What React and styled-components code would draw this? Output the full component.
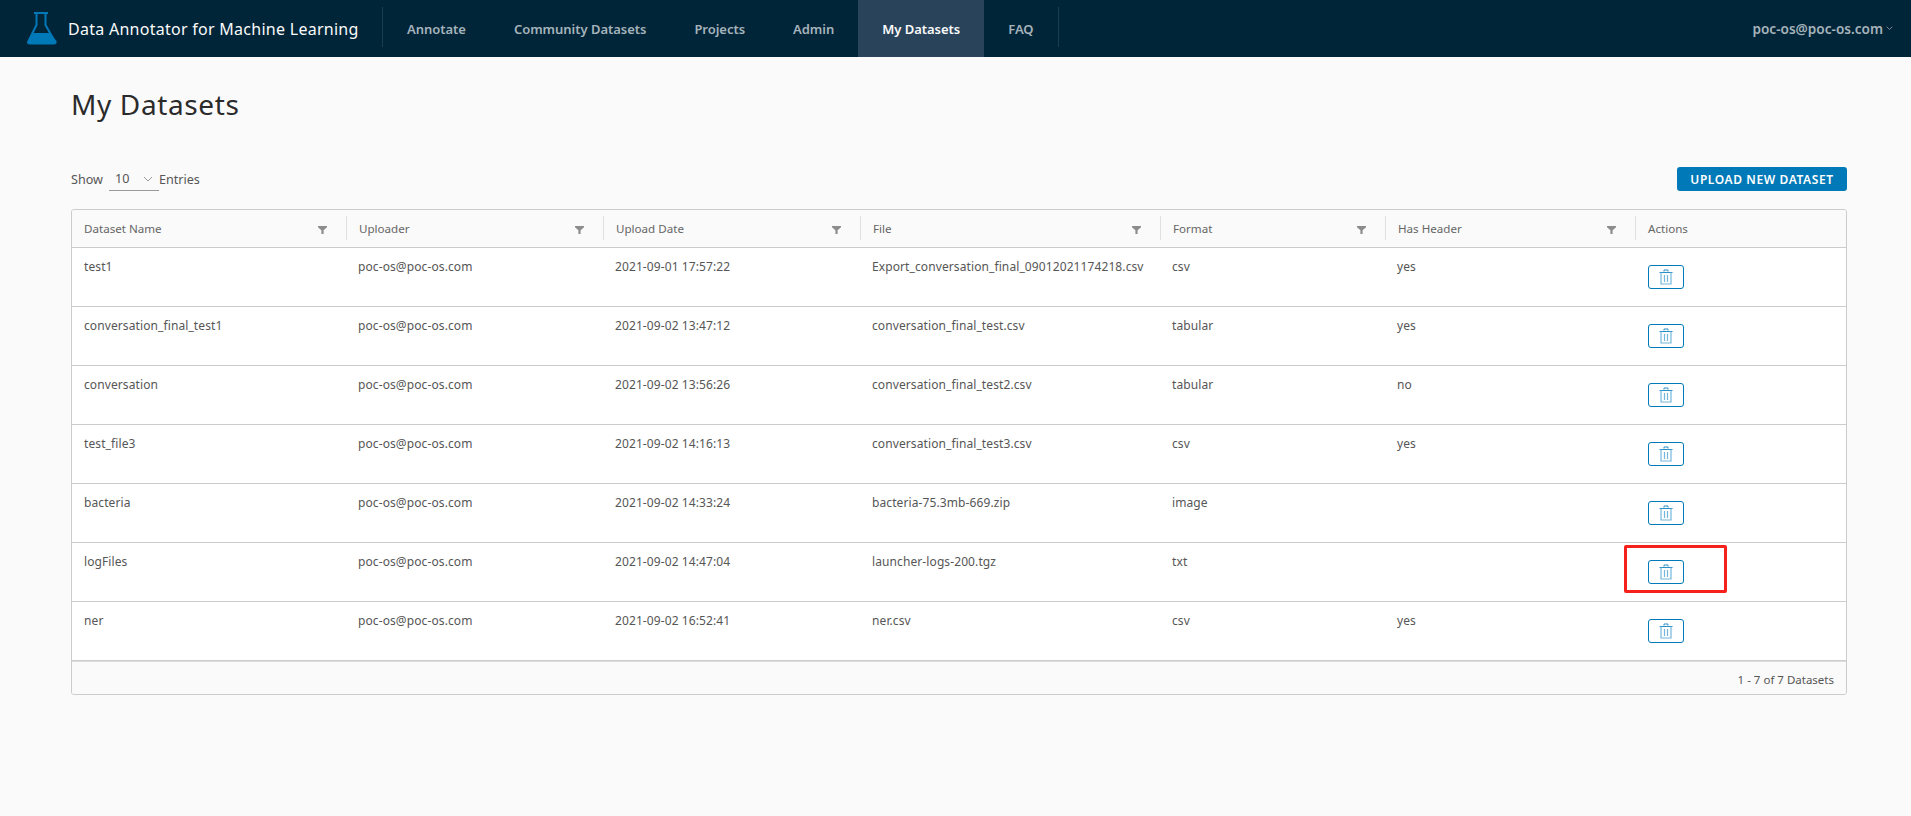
import React from "react";
import styled, { createGlobalStyle } from "styled-components";

const Global = createGlobalStyle`
  html, body { margin: 0; padding: 0; background: #fafafa; }
  body { font-family: "Noto Sans", "Open Sans", sans-serif; color: #565656; font-size: 12px; }
`;

const Page = styled.div`
  min-height: 816px;
  background: #fafafa;
`;

const Nav = styled.header`
  height: 57px;
  background: #002538;
  display: flex;
  align-items: stretch;
`;

const Brand = styled.div`
  display: flex;
  align-items: center;
  width: 382px;
  padding-left: 27px;
  box-sizing: border-box;
  color: #fafafa;
  font-size: 16px;
  letter-spacing: 0.27px;
  gap: 11px;
`;

const NavLinks = styled.nav`
  display: flex;
  align-items: stretch;
  height: 57px;
  margin: 0;
  &::before {
    content: "";
    width: 1px;
    margin: 7px 0 10px;
    background: #1c3d50;
  }
`;

const NavItem = styled.a`
  display: flex;
  align-items: center;
  padding: 0 24px;
  font-size: 13px;
  font-weight: 600;
  letter-spacing: -0.03px;
  color: ${(p) => (p.$active ? "#fafafa" : "#a6b3bb")};
  background: ${(p) => (p.$active ? "#29445a" : "transparent")};
`;

const NavEnd = styled.div`
  width: 1px;
  margin: 7px 0 10px;
  background: #1c3d50;
`;

const User = styled.div`
  margin-left: auto;
  display: flex;
  align-items: center;
  gap: 3px;
  padding-right: 18px;
  color: #a6b3bb;
  font-size: 13.6px;
  font-weight: 600;
`;

const Main = styled.main`
  padding: 0 64px 0 71px;
`;

const Title = styled.h1`
  margin: 0;
  padding-top: 30px;
  height: 80px;
  box-sizing: content-box;
  line-height: 34px;
  font-size: 28px;
  font-weight: 400;
  letter-spacing: 0.63px;
  color: #2b2b2b;
`;

const Toolbar = styled.div`
  display: flex;
  align-items: center;
  justify-content: space-between;
  height: 24px;
  margin-bottom: 18px;
`;

const ShowEntries = styled.div`
  display: flex;
  align-items: center;
  font-size: 12.6px;
  color: #565656;
`;

const PageSize = styled.div`
  display: flex;
  align-items: center;
  justify-content: space-between;
  width: 50px;
  height: 23px;
  box-sizing: border-box;
  margin: 0 0 0 6px;
  padding: 0 6px;
  border-bottom: 1px solid #9a9a9a;
  color: #565656;
`;

const UploadButton = styled.button`
  width: 170px;
  height: 24px;
  border: 0;
  border-radius: 3px;
  background: #0079b8;
  color: #fff;
  font-family: inherit;
  font-size: 12px;
  font-weight: 600;
  letter-spacing: 0.6px;
  text-transform: uppercase;
  padding: 0;
`;

const Grid = styled.div`
  border: 1px solid #ccc;
  border-radius: 3px;
  background: #fff;
  height: 486px;
  box-sizing: border-box;
  overflow: hidden;
`;

const columns = "274px 257px 257px 300px 225px 250px 1fr";

const HeadRow = styled.div`
  display: grid;
  grid-template-columns: ${columns};
  height: 37px;
  background: #fafafa;
  border-bottom: 1px solid #ccc;
`;

const HeadCell = styled.div`
  display: flex;
  align-items: center;
  justify-content: space-between;
  margin: 6px 0 6px;
  height: 24px;
  padding: 0 19px 0 12px;
  box-sizing: border-box;
  border-left: ${(p) => (p.$first ? "0" : "1px solid #e0e0e0")};
  font-size: 11.6px;
  color: #666;
`;

const Row = styled.div`
  display: grid;
  grid-template-columns: ${columns};
  height: 59px;
  box-sizing: border-box;
  background: #fff;
  border-bottom: 1px solid #ccc;
`;

const Cell = styled.div`
  padding: 11px 12px 0;
  line-height: 16px;
  font-size: 12px;
  letter-spacing: 0.1px;
  color: #565656;
  white-space: nowrap;
`;

const ActionCell = styled.div`
  position: relative;
  padding: 17px 0 0 13px;
`;

const TrashButton = styled.button`
  display: flex;
  align-items: center;
  justify-content: center;
  width: 36px;
  height: 24px;
  padding: 0;
  background: #fff;
  border: 1px solid #0079b8;
  border-radius: 3px;
`;

const Marker = styled.div`
  position: absolute;
  left: -11px;
  top: 2px;
  width: 103px;
  height: 48px;
  box-sizing: border-box;
  border: 3px solid #f5211a;
  border-radius: 2px;
`;

const Footer = styled.div`
  display: flex;
  align-items: center;
  justify-content: flex-end;
  height: 35px;
  padding-right: 12px;
  background: #fafafa;
  border-top: 1px solid #ddd;
  font-size: 11.5px;
  color: #565656;
`;

const FunnelMark = styled.svg`
  margin-top: 3px;
`;

const Flask = () => (
  <svg width="30" height="33" viewBox="0 0 30 33">
    <path d="M7 1h14" stroke="#0079b8" strokeWidth="2" fill="none" />
    <path d="M9.5 1v12L2 28M18.5 1v12L27 28" stroke="#0079b8" strokeWidth="2" fill="none" />
    <path d="M6.5 21h16.5L29.5 29c.6 2-.5 3.5-2.500 3.500H2.500C.5 32.500-.5 31 .3 29Z" fill="#0079b8" />
  </svg>
);

const Chevron = ({ size = 10, color = "#9a9a9a" }) => (
  <svg width={size} height={size * 0.6} viewBox="0 0 10 6">
    <path d="M1 1l4 4 4-4" stroke={color} strokeWidth="1" fill="none" />
  </svg>
);

const Funnel = () => (
  <FunnelMark width="9" height="8" viewBox="0 0 9 8">
    <path d="M0 0h9v1.300L5.600 4.200V8H3.400V4.200L0 1.300Z" fill="#8c8c8c" />
  </FunnelMark>
);

const Trash = () => (
  <svg width="14" height="16" viewBox="0 0 14 16">
    <path d="M0.500 3.500h13M5 2.500V1h4v1.500" stroke="#2a8fc7" strokeWidth="1" fill="none" />
    <path d="M2 3.500v11.500h10V3.500" stroke="#74b6dc" strokeWidth="1.200" fill="none" />
    <path d="M5.500 6v7M8.500 6v7" stroke="#74b6dc" strokeWidth="1.200" fill="none" />
  </svg>
);

const links = ["Annotate", "Community Datasets", "Projects", "Admin", "My Datasets", "FAQ"];
const heads = ["Dataset Name", "Uploader", "Upload Date", "File", "Format", "Has Header"];
const user = "poc-os@poc-os.com";

const rows = [
  ["test1", "2021-09-01 17:57:22", "Export_conversation_final_09012021174218.csv", "csv", "yes"],
  ["conversation_final_test1", "2021-09-02 13:47:12", "conversation_final_test.csv", "tabular", "yes"],
  ["conversation", "2021-09-02 13:56:26", "conversation_final_test2.csv", "tabular", "no"],
  ["test_file3", "2021-09-02 14:16:13", "conversation_final_test3.csv", "csv", "yes"],
  ["bacteria", "2021-09-02 14:33:24", "bacteria-75.3mb-669.zip", "image", ""],
  ["logFiles", "2021-09-02 14:47:04", "launcher-logs-200.tgz", "txt", ""],
  ["ner", "2021-09-02 16:52:41", "ner.csv", "csv", "yes"],
];

export default function App() {
  return (
    <Page>
      <Global />
      <Nav>
        <Brand>
          <Flask />
          Data Annotator for Machine Learning
        </Brand>
        <NavLinks>
          {links.map((l) => (
            <NavItem key={l} $active={l === "My Datasets"}>{l}</NavItem>
          ))}
        </NavLinks>
        <NavEnd />
        <User>
          {user}
          <Chevron size={7} color="#a6b3bb" />
        </User>
      </Nav>
      <Main>
        <Title>My Datasets</Title>
        <Toolbar>
          <ShowEntries>
            Show
            <PageSize>
              10
              <Chevron />
            </PageSize>
            Entries
          </ShowEntries>
          <UploadButton>Upload new dataset</UploadButton>
        </Toolbar>
        <Grid>
          <HeadRow>
            {heads.map((h, i) => (
              <HeadCell key={h} $first={i === 0}>
                {h}
                <Funnel />
              </HeadCell>
            ))}
            <HeadCell>Actions</HeadCell>
          </HeadRow>
          {rows.map((r) => (
            <Row key={r[0]}>
              <Cell>{r[0]}</Cell>
              <Cell>{user}</Cell>
              <Cell>{r[1]}</Cell>
              <Cell>{r[2]}</Cell>
              <Cell>{r[3]}</Cell>
              <Cell>{r[4]}</Cell>
              <ActionCell>
                <TrashButton><Trash /></TrashButton>
                {r[0] === "logFiles" && <Marker />}
              </ActionCell>
            </Row>
          ))}
          <Footer>1 - 7 of 7 Datasets</Footer>
        </Grid>
      </Main>
    </Page>
  );
}
